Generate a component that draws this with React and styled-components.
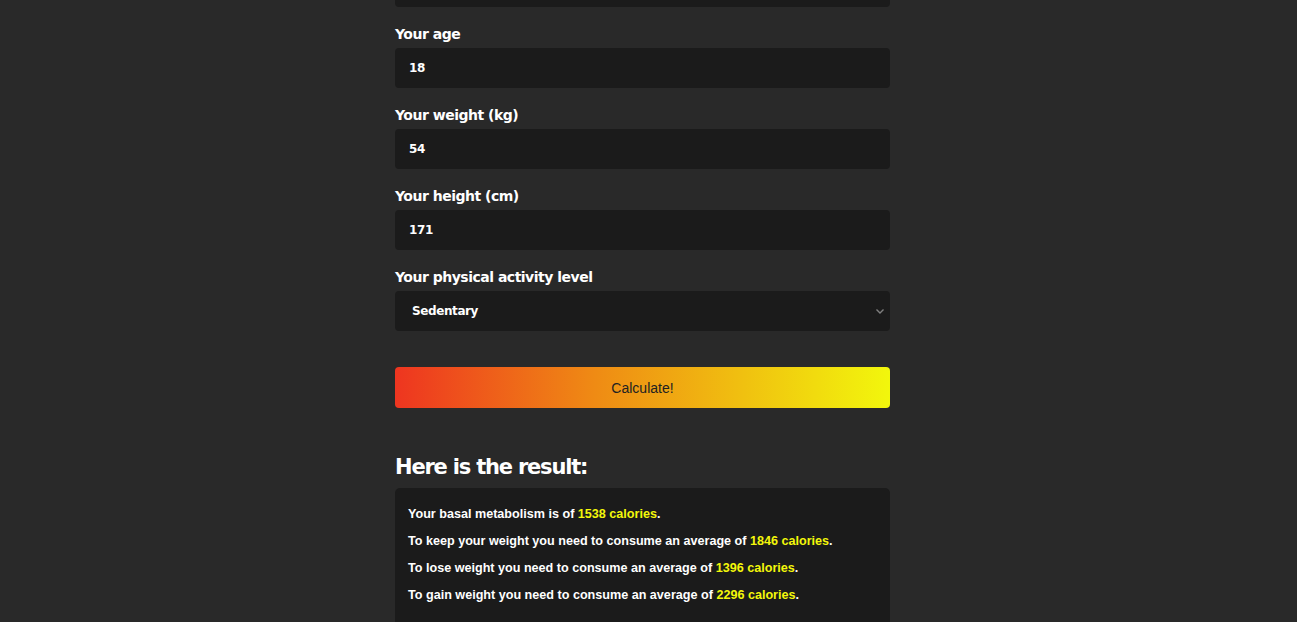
import React from "react";
import styled, { createGlobalStyle } from "styled-components";

const Global = createGlobalStyle`
  html, body { margin: 0; padding: 0; background: #292929; overflow: hidden; }
  body { font-family: "DejaVu Sans", "Open Sans", sans-serif; color: #fff; }
`;

const Page = styled.div`
  display: flex;
  justify-content: center;
  align-items: flex-start;
  padding-right: 12px;
  height: 622px;
  overflow: hidden;
`;

const Form = styled.div`
  width: 495px;
  display: flex;
  flex-direction: column;
  flex-shrink: 0;
  margin-top: -33px;
  & > * { flex-shrink: 0; }
`;

const Field = styled.div`
  display: flex;
  flex-direction: column;
  margin-bottom: 18px;
`;

const Label = styled.label`
  font-family: "DejaVu Sans", sans-serif;
  font-weight: 700;
  font-size: 14px;
  letter-spacing: -0.5px;
  color: #fff;
  height: 18px;
  line-height: 18px;
  margin-bottom: 5px;
`;

const Input = styled.div`
  height: 40px;
  box-sizing: border-box;
  background: #1b1b1b;
  border-radius: 4px;
  padding: 0 14px;
  display: flex;
  align-items: center;
  font-family: "DejaVu Sans", sans-serif;
  font-weight: 700;
  font-size: 12px;
  letter-spacing: -0.4px;
  color: #fff;
`;

const Select = styled(Input)`
  justify-content: space-between;
  padding: 0 4px 0 17px;
`;

const Chevron = styled.svg`
  width: 12px;
  height: 12px;
`;

const Button = styled.button`
  margin-top: 18px;
  height: 41px;
  border: 0;
  border-radius: 4px;
  background: linear-gradient(90deg, #ee3520 0%, #ef8a14 40%, #f0c010 70%, #f2f70c 100%);
  font-family: "Liberation Sans", Arial, sans-serif;
  font-size: 14px;
  color: #222;
  padding: 0;
`;

const Heading = styled.h2`
  margin: 46px 0 8px;
  font-family: "DejaVu Sans", sans-serif;
  font-weight: 700;
  font-size: 21px;
  letter-spacing: -1.2px;
  line-height: 26px;
  color: #fff;
`;

const Result = styled.div`
  background: #1b1b1b;
  border-radius: 5px;
  padding: 18px 13px 30px;
  display: flex;
  flex-direction: column;
  gap: 11px;
`;

const Line = styled.p`
  margin: 0;
  font-family: "Liberation Sans", Arial, sans-serif;
  font-weight: 700;
  font-size: 12.6px;
  line-height: 16px;
  color: #fff;
`;

const Cal = styled.span`
  color: #f3f70a;
`;

const fields = [
  { label: "Your age", value: "18" },
  { label: "Your weight (kg)", value: "54" },
  { label: "Your height (cm)", value: "171" },
];

export default function App() {
  return (
    <>
      <Global />
      <Page>
        <Form>
          <Field>
            <Input />
          </Field>
          {fields.map((f) => (
            <Field key={f.label}>
              <Label>{f.label}</Label>
              <Input>{f.value}</Input>
            </Field>
          ))}
          <Field>
            <Label>Your physical activity level</Label>
            <Select>
              <span>Sedentary</span>
              <Chevron viewBox="0 0 12 12">
                <path d="M2.5 4.5 L6 8 L9.5 4.5" fill="none" stroke="#808080" strokeWidth="1.4" />
              </Chevron>
            </Select>
          </Field>
          <Button>Calculate!</Button>
          <Heading>Here is the result:</Heading>
          <Result>
            <Line>Your basal metabolism is of <Cal>1538 calories</Cal>.</Line>
            <Line>To keep your weight you need to consume an average of <Cal>1846 calories</Cal>.</Line>
            <Line>To lose weight you need to consume an average of <Cal>1396 calories</Cal>.</Line>
            <Line>To gain weight you need to consume an average of <Cal>2296 calories</Cal>.</Line>
          </Result>
        </Form>
      </Page>
    </>
  );
}
